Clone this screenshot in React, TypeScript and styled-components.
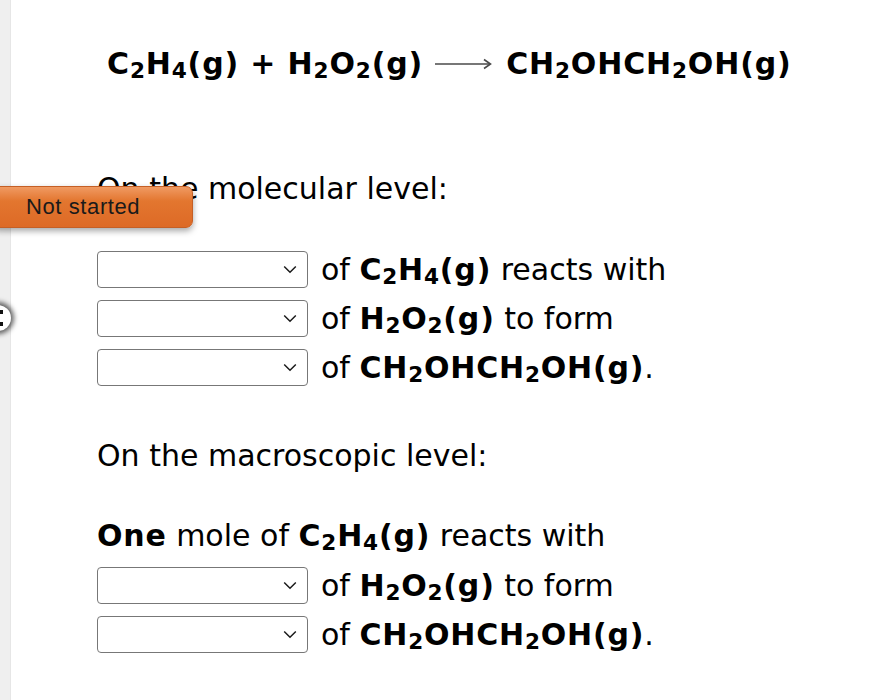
import React from 'react'
import styled, { createGlobalStyle } from 'styled-components'

const GlobalStyle = createGlobalStyle`
  html, body {
    margin: 0;
    padding: 0;
    background: #ffffff;
  }
  body {
    font-family: "DejaVu Sans", Verdana, sans-serif;
    color: #000000;
  }
  b {
    letter-spacing: 0.8px;
  }
`

const Page = styled.div`
  display: flex;
  min-height: 700px;
  position: relative;
  overflow: hidden;
`

const Gutter = styled.div`
  width: 10px;
  flex: none;
  background: #efefef;
  border-right: 1px solid #e6e6e6;
`

const Main = styled.main`
  flex: 1;
  padding: 46px 0 0 86px;
`

const Equation = styled.div`
  display: flex;
  align-items: center;
  font-size: 30px;
  line-height: 36px;
  font-weight: bold;
  letter-spacing: 0.85px;
  padding-left: 10px;

  svg {
    margin: 0 14px 0 11px;
  }
`

const Sub = styled.sub`
  font-size: 0.72em;
  vertical-align: -0.2em;
  line-height: 0;
`

const Paragraph = styled.p<{ $top: number }>`
  margin: ${({ $top }) => $top}px 0 0;
  font-size: 30px;
  line-height: 36px;
`

const Rows = styled.div<{ $top: number }>`
  display: flex;
  flex-direction: column;
  gap: 12px;
  margin-top: ${({ $top }) => $top}px;
`

const Row = styled.div`
  display: flex;
  align-items: center;
  gap: 13px;
  font-size: 30px;
  line-height: 36px;
  height: 37px;
`

const SelectBox = styled.div`
  width: 211px;
  height: 37px;
  flex: none;
  box-sizing: border-box;
  border: 1.5px solid #777777;
  border-radius: 4px;
  background: #fff;
  display: flex;
  align-items: center;
  justify-content: flex-end;
  padding-right: 10px;
`

const StatusBadge = styled.div`
  position: absolute;
  left: -8px;
  top: 186px;
  width: 201px;
  height: 42px;
  box-sizing: border-box;
  padding-left: 33px;
  display: flex;
  align-items: center;
  font-family: "Liberation Sans", Arial, sans-serif;
  font-size: 22px;
  letter-spacing: 0.6px;
  color: #1a1a1a;
  background: linear-gradient(#f09a62 0%, #e3762f 35%, #dd6a26 100%);
  border: 1px solid #c55f25;
  border-radius: 7px;
  box-shadow: 0 3px 6px rgba(0, 0, 0, 0.35);
`

const SideHandle = styled.div`
  position: absolute;
  left: -15px;
  top: 305px;
  width: 26px;
  height: 26px;
  border-radius: 50%;
  background: #fff;
  box-shadow: 0 0 5px 3px rgba(0, 0, 0, 0.6);
  display: flex;
  flex-direction: column;
  align-items: flex-end;
  justify-content: center;
  gap: 8px;
  padding-right: 8px;
  box-sizing: border-box;
`

const Dot = styled.span`
  width: 3px;
  height: 4px;
  background: #111;
`

function Chevron() {
  return (
    <svg width="14" height="9" viewBox="0 0 14 9">
      <path d="M1.2 1.5 L7 7.3 L12.8 1.5" fill="none" stroke="#1a1a1a" strokeWidth="1.5" />
    </svg>
  )
}

function Arrow() {
  return (
    <svg width="58" height="14" viewBox="0 0 58 14">
      <path d="M1 7 H56" stroke="#4a4a4a" strokeWidth="1.6" />
      <path d="M50 2.5 L56.5 7 L50 11.5" fill="none" stroke="#4a4a4a" strokeWidth="1.6" />
    </svg>
  )
}

const C2H4 = () => (
  <b>
    C<Sub>2</Sub>H<Sub>4</Sub>(g)
  </b>
)
const H2O2 = () => (
  <b>
    H<Sub>2</Sub>O<Sub>2</Sub>(g)
  </b>
)
const Glycol = () => (
  <b>
    CH<Sub>2</Sub>OHCH<Sub>2</Sub>OH(g)
  </b>
)

function Blank({ children }: { children: React.ReactNode }) {
  return (
    <Row>
      <SelectBox>
        <Chevron />
      </SelectBox>
      <span>{children}</span>
    </Row>
  )
}

export default function App() {
  return (
    <>
      <GlobalStyle />
      <Page>
        <Gutter />
        <Main>
          <Equation>
            <span>
              C<Sub>2</Sub>H<Sub>4</Sub>(g) + H<Sub>2</Sub>O<Sub>2</Sub>(g)
            </span>
            <Arrow />
            <span>
              CH<Sub>2</Sub>OHCH<Sub>2</Sub>OH(g)
            </span>
          </Equation>

          <Paragraph $top={89}>On the molecular level:</Paragraph>

          <Rows $top={44}>
            <Blank>
              of <C2H4 /> reacts with
            </Blank>
            <Blank>
              of <H2O2 /> to form
            </Blank>
            <Blank>
              of <Glycol />.
            </Blank>
          </Rows>

          <Paragraph $top={52}>On the macroscopic level:</Paragraph>

          <Paragraph $top={44}>
            <b>One</b> mole of <C2H4 /> reacts with
          </Paragraph>

          <Rows $top={13}>
            <Blank>
              of <H2O2 /> to form
            </Blank>
            <Blank>
              of <Glycol />.
            </Blank>
          </Rows>
        </Main>
        <StatusBadge>Not started</StatusBadge>
        <SideHandle>
          <Dot />
          <Dot />
        </SideHandle>
      </Page>
    </>
  )
}
